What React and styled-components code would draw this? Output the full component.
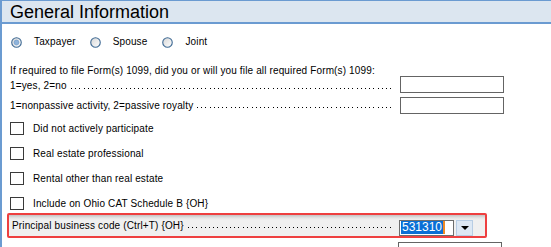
import React from "react";
import styled, { createGlobalStyle } from "styled-components";

const GlobalStyle = createGlobalStyle`
  html, body {
    margin: 0;
    padding: 0;
    background: #ffffff;
  }
  body {
    font-family: "Liberation Sans", Arial, sans-serif;
    font-size: 10px;
    letter-spacing: 0.14px;
    color: #000000;
  }
`;

const Panel = styled.div`
  width: 551px;
  height: 247px;
  overflow: hidden;
  border-left: 2px solid #6b9bd1;
  box-sizing: border-box;
  background: #ffffff;
`;

const Header = styled.div`
  height: 21px;
  background: #dce6f0;
  border-top: 1px solid #6b9bd1;
  border-bottom: 2px solid #6b9bd1;
  display: flex;
  align-items: center;
  padding-left: 8px;
  font-size: 18px;
  letter-spacing: 0;
  line-height: 22px;
  color: #000000;
`;

const Body = styled.div`
  padding-left: 8px;
  display: flex;
  flex-direction: column;
`;

const RadioGroup = styled.div`
  display: flex;
  align-items: center;
  height: 14px;
  margin-top: 11px;
  padding-left: 1px;
`;

const RadioOption = styled.label`
  display: flex;
  align-items: center;
  gap: 12px;
  margin-right: ${(p) => p.$space}px;
  line-height: 14px;
`;

const Question = styled.div`
  margin-top: 17px;
  height: 10px;
  line-height: 10px;
  white-space: nowrap;
`;

const FieldRow = styled.div`
  display: flex;
  align-items: ${(p) => (p.$bottom ? "flex-end" : "center")};
  height: 17px;
  margin-top: ${(p) => p.$top}px;
  width: 494px;
`;

const Label = styled.span`
  white-space: nowrap;
  line-height: 14px;
`;

const Leader = styled.span`
  flex: 1;
  height: 1px;
  align-self: ${(p) => (p.$bottom ? "flex-end" : "center")};
  margin: ${(p) => (p.$bottom ? "0 7px 4px 4px" : "3px 7px 0 4px")};
  background: repeating-linear-gradient(
    to right,
    #000000 0,
    #000000 1px,
    transparent 1px,
    transparent 4.2px
  );
`;

const TextBox = styled.div`
  width: 104px;
  height: 17px;
  box-sizing: border-box;
  border: 1px solid #646464;
  background: #ffffff;
`;

const CheckRow = styled.label`
  display: flex;
  align-items: center;
  gap: 9px;
  height: 13px;
  margin-top: ${(p) => p.$top}px;
  line-height: 13px;
`;

const CheckBox = styled.span`
  width: 14px;
  height: 13px;
  box-sizing: border-box;
  border: 1px solid #3a3a3a;
  background: #ffffff;
`;

const Highlight = styled.div`
  margin: 3px 0 0 -3px;
  width: 480px;
  height: 25px;
  box-sizing: border-box;
  border: 2px solid #ee4040;
  border-radius: 2px;
  background: linear-gradient(#c4c4c4 0, #e6e6e6 3px, #f0f0f0 5px, #f0f0f0 100%);
  display: flex;
  align-items: center;
  padding-left: 3px;
`;

const HighlightLabel = styled.span`
  white-space: nowrap;
  line-height: 14px;
  margin-top: 1px;
`;

const ComboBox = styled.div`
  display: flex;
  align-items: center;
  gap: 2px;
  margin-top: 4px;
  margin-right: 12px;
`;

const ComboInput = styled.div`
  width: 55px;
  height: 16px;
  box-sizing: border-box;
  border: 1px solid #6d6d6d;
  background: #ffffff;
  display: flex;
  align-items: center;
  padding-left: 1px;
`;

const Selected = styled.span`
  background: #0a6fd6;
  color: #ffffff;
  font-size: 12px;
  letter-spacing: 0;
  line-height: 13px;
  padding: 0 1px;
  border-right: 2px solid #f08a24;
`;

const DropButton = styled.div`
  width: 17px;
  height: 16px;
  box-sizing: border-box;
  border: 1px solid #b8cde4;
  background: #dde8f4;
  display: flex;
  align-items: center;
  justify-content: center;
`;

const NextBox = styled(TextBox)`
  margin: 4px 0 0 388px;
`;

const Radio = ({ checked }) => (
  <svg width="11" height="11" viewBox="0 0 12 12">
    <defs>
      <linearGradient id="rg" x1="0" y1="0" x2="1" y2="1">
        <stop offset="0" stopColor="#d6d6d6" />
        <stop offset="1" stopColor="#ffffff" />
      </linearGradient>
    </defs>
    <circle cx="6" cy="6" r="5.2" fill="url(#rg)" stroke="#3f6a94" strokeWidth="1.2" />
    {checked && <circle cx="6" cy="6" r="2.7" fill="#8fb3da" stroke="#5c8dc2" strokeWidth="0.6" />}
  </svg>
);

const Arrow = () => (
  <svg width="8" height="4" viewBox="0 0 8 4">
    <path d="M0 0h8L4 4z" fill="#000000" />
  </svg>
);

const checks = [
  "Did not actively participate",
  "Real estate professional",
  "Rental other than real estate",
  "Include on Ohio CAT Schedule B {OH}",
];

export default function App() {
  return (
    <>
      <GlobalStyle />
      <Panel>
        <Header>General Information</Header>
        <Body>
          <RadioGroup>
            <RadioOption $space={14}>
              <Radio checked />
              Taxpayer
            </RadioOption>
            <RadioOption $space={15}>
              <Radio />
              Spouse
            </RadioOption>
            <RadioOption $space={0}>
              <Radio />
              Joint
            </RadioOption>
          </RadioGroup>

          <Question>
            If required to file Form(s) 1099, did you or will you file all required Form(s) 1099:
          </Question>
          <FieldRow $top={0} $bottom>
            <Label>1=yes, 2=no</Label>
            <Leader $bottom />
            <TextBox />
          </FieldRow>
          <FieldRow $top={4}>
            <Label>1=nonpassive activity, 2=passive royalty</Label>
            <Leader />
            <TextBox />
          </FieldRow>

          {checks.map((c, i) => (
            <CheckRow key={c} $top={i === 0 ? 8 : 12}>
              <CheckBox />
              {c}
            </CheckRow>
          ))}

          <Highlight>
            <HighlightLabel>Principal business code (Ctrl+T) {"{OH}"}</HighlightLabel>
            <Leader />
            <ComboBox>
              <ComboInput>
                <Selected>531310</Selected>
              </ComboInput>
              <DropButton>
                <Arrow />
              </DropButton>
            </ComboBox>
          </Highlight>
          <NextBox />
        </Body>
      </Panel>
    </>
  );
}
